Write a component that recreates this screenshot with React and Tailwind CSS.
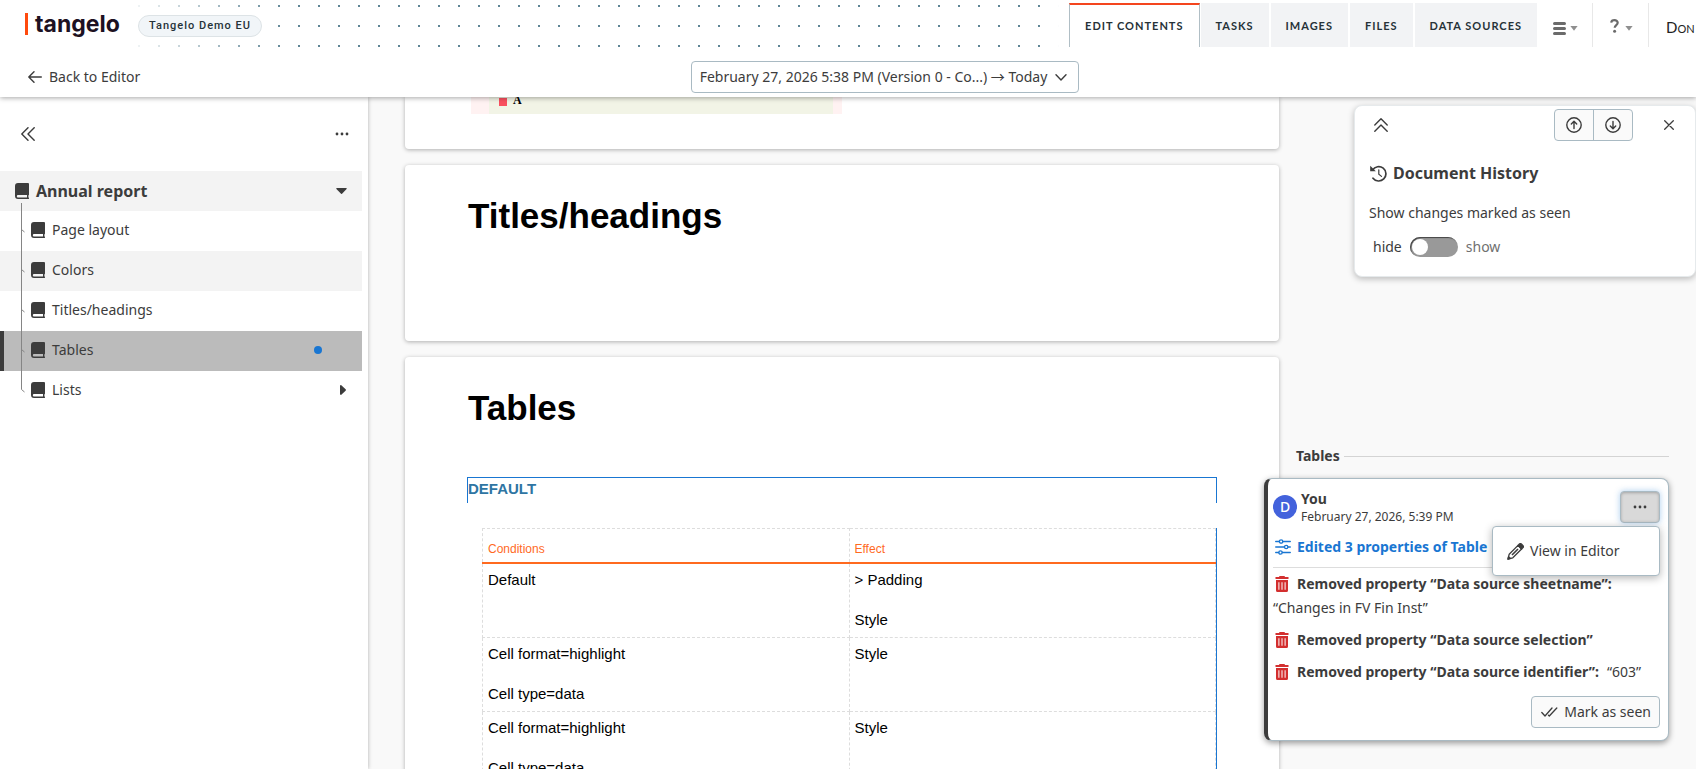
import React, { useState } from "react";

const TREE = [
  { label: "Page layout" },
  { label: "Colors", shaded: true },
  { label: "Titles/headings" },
  { label: "Tables", active: true },
  { label: "Lists", more: true },
];

const TABS = ["Tasks", "Images", "Files", "Data sources"];

const ROWS = [
  [["Default"], ["> Padding", "Style"]],
  [["Cell format=highlight", "Cell type=data"], ["Style"]],
  [["Cell format=highlight", "Cell type=data"], ["Style"]],
];

const stroke = {
  fill: "none",
  stroke: "currentColor",
  strokeLinecap: "round",
  strokeLinejoin: "round",
};

function BookIcon() {
  return (
    <svg width="14" height="16" viewBox="0 0 14 16" className="shrink-0" aria-hidden="true">
      <path
        fill="currentColor"
        d="M3 0h10a1 1 0 0 1 1 1v10.5a1 1 0 0 1-.6.9v2.1h.1a.75.75 0 0 1 0 1.5H3a3 3 0 0 1-3-3V3a3 3 0 0 1 3-3zm0 12a1.2 1.2 0 0 0 0 2.4h9V12z"
      />
    </svg>
  );
}

function Ellipsis() {
  return (
    <svg width="14" height="4" viewBox="0 0 14 4" fill="currentColor" aria-hidden="true">
      <circle cx="2" cy="2" r="1.4" />
      <circle cx="7" cy="2" r="1.4" />
      <circle cx="12" cy="2" r="1.4" />
    </svg>
  );
}

function TrashIcon() {
  return (
    <svg width="14" height="16" viewBox="0 0 14 16" className="shrink-0 text-[#d32f2f]" aria-hidden="true">
      <path
        fill="currentColor"
        fillRule="evenodd"
        d="M4.5 0h5l.5 1h3.500v2H.5V1H4zM1 4h12v10.500a1.500 1.500 0 0 1-1.500 1.500h-9A1.500 1.500 0 0 1 1 14.500zM3.400 6.200v7.600h1V6.200zM6.500 6.200v7.600h1V6.200zM9.600 6.200v7.600h1V6.200z"
      />
    </svg>
  );
}

function SlidersIcon() {
  return (
    <svg width="16" height="16" viewBox="0 0 16 16" {...stroke} strokeWidth="1.300" aria-hidden="true">
      <path d="M.7 2.500h3.600M8 2.500h7.300M.7 8h8.600M13 8h2.300M.7 13.500h3M7.400 13.500h7.900" />
      <circle cx="6.100" cy="2.500" r="1.700" />
      <circle cx="11.200" cy="8" r="1.700" />
      <circle cx="5.500" cy="13.500" r="1.700" />
    </svg>
  );
}

function Caret({ className }) {
  return (
    <svg width="8" height="5" viewBox="0 0 8 5" className={className} aria-hidden="true">
      <path d="M.4 0h7.200L4 4.800z" fill="currentColor" />
    </svg>
  );
}

function Header() {
  return (
    <header className="relative z-30 flex h-[47px] shrink-0 items-stretch bg-white">
      <a href="#home" className="flex w-[138px] shrink-0 items-center pt-px pl-[25px]" aria-label="tangelo home">
        <span className="h-[22px] w-[3px] bg-[#ff4a0d]" />
        <span className="pl-[7px] font-['Inter',sans-serif] text-[23px] leading-6 font-bold text-[#1d1122]">
          tangelo
        </span>
      </a>
      <div className="relative flex min-w-0 flex-1 items-center">
        <svg
          className="absolute inset-0 h-full w-full mask-[linear-gradient(to_right,rgba(0,0,0,0.1),#000_150px,#000_calc(100%_-_20px),transparent)]"
          aria-hidden="true"
        >
          <defs>
            <pattern id="dots" width="20" height="20" patternUnits="userSpaceOnUse">
              <rect x="0" y="5" width="2" height="2" fill="#5f8595" />
            </pattern>
          </defs>
          <rect width="100%" height="100%" fill="url(#dots)" />
        </svg>
        <span className="relative mt-[5px] rounded-full border border-[#dde3e6] bg-[#f1f5f8] px-[10px] font-['Roboto',sans-serif] text-[11px] leading-5 font-medium tracking-[1px] text-[#263238]">
          Tangelo Demo EU
        </span>
      </div>
      <nav className="ml-[10px] flex shrink-0 items-stretch gap-[2px] pt-[3px] font-['Lato',sans-serif] text-[11px] font-bold tracking-[1px] text-[#263238] uppercase">
        <a
          href="#edit"
          aria-current="page"
          className="-mr-px flex items-center border-x border-t-2 border-x-[#b0bec5] border-t-[#f4451e] px-[15px]"
        >
          Edit contents
        </a>
        {TABS.map((tab) => (
          <a key={tab} href={"#" + tab} className="flex items-center bg-[#f2f3f5] px-[15px] pt-[2px]">
            {tab}
          </a>
        ))}
      </nav>
      <div className="flex shrink-0 items-stretch pt-[3px] text-[#6b6b6b]">
        <button aria-label="Menu" className="flex w-[56px] items-center gap-1 border-r border-[#e8e8e8] pt-[6px] pl-4">
          <svg width="13" height="13" viewBox="0 0 13 13" aria-hidden="true">
            <path d="M1.500 1.500h10M1.500 6.500h10M1.500 11.500h10" stroke="currentColor" strokeWidth="3" strokeLinecap="round" />
          </svg>
          <Caret className="text-[#8f8f8f]" />
        </button>
        <button aria-label="Help" className="flex w-[56px] items-center gap-[6px] border-r border-[#e8e8e8] pt-[6px] pl-[17px]">
          <svg width="9" height="14" viewBox="0 0 9 14" className="mb-1" aria-hidden="true">
            <path d="M1.200 3.600C1.400 2 2.800 1.200 4.500 1.200s3.200.9 3.200 2.600c0 2.200-3 2.400-3 5" fill="none" stroke="currentColor" strokeWidth="2.200" />
            <circle cx="4.600" cy="12.300" r="1.500" fill="currentColor" />
          </svg>
          <Caret className="text-[#8f8f8f]" />
        </button>
        <span className="w-[47px] overflow-hidden pt-[14px] pl-[17px] font-['Lato',sans-serif] text-[15px] whitespace-nowrap text-[#222] [font-variant:small-caps]">
          Don
        </span>
      </div>
    </header>
  );
}

function VersionBar() {
  return (
    <div className="relative z-20 grid h-[50px] shrink-0 grid-cols-[1fr_auto_1fr] items-center bg-white pt-[10px] shadow-[0_1px_5px_rgba(0,0,0,0.35)]">
      <div className="pl-7">
        <a href="#back" className="inline-flex items-center gap-[7px]">
          <svg width="14" height="12" viewBox="0 0 14 12" {...stroke} strokeWidth="1.400" aria-hidden="true">
            <path d="M13.300 6H.8M6 .8.8 6 6 11.200" />
          </svg>
          Back to Editor
        </a>
      </div>
      <button className="ml-[74px] flex h-8 items-center gap-2 rounded border border-[#a9bac3] bg-white pr-[11px] pl-2">
        <span>
          February 27, 2026 5:38 PM (Version 0 - Co...){" "}
          <span className="font-['Noto_Sans_CJK_JP',sans-serif] leading-none">→</span> Today
        </span>
        <svg width="12" height="7" viewBox="0 0 12 7" {...stroke} strokeWidth="1.400" aria-hidden="true">
          <path d="M1 .8 6 6 11 .8" />
        </svg>
      </button>
    </div>
  );
}

function Sidebar() {
  return (
    <aside className="relative z-10 w-[368px] shrink-0 bg-white pr-[6px] shadow-[0_0_4px_rgba(0,0,0,0.3)]">
      <div className="flex h-[74px] items-center justify-between pr-[13px] pl-[21px]">
        <button aria-label="Collapse sidebar">
          <svg width="14" height="14" viewBox="0 0 14 14" {...stroke} strokeWidth="1.400" aria-hidden="true">
            <path d="M7 .7.8 7 7 13.300M13.200.7 7 7l6.200 6.300" />
          </svg>
        </button>
        <button aria-label="More options">
          <Ellipsis />
        </button>
      </div>
      <div className="flex h-10 items-center gap-[7px] bg-[#f3f3f3] pr-[15px] pl-[15px] text-[16px] font-bold">
        <BookIcon />
        <span className="flex-1">Annual report</span>
        <svg width="11" height="6" viewBox="0 0 11 6" fill="currentColor" aria-hidden="true">
          <path d="M.9 0h9.200c.6 0 .9.700.5 1.100L6.300 5.600a1 1 0 0 1-1.500 0L.4 1.100C0 .7.300 0 .9 0z" />
        </svg>
      </div>
      <ul className="relative">
        {TREE.map((item) => (
          <li
            key={item.label}
            className={
              "flex h-10 items-center gap-[7px] pr-[15px] pb-[2px] " +
              (item.active ? "border-l-4 border-[#3c3c3c] bg-[#bbb] pl-[27px]" : item.shaded ? "bg-[#f3f3f3] pl-[31px]" : "pl-[31px]")
            }
          >
            <BookIcon />
            <a href={"#" + item.label} className="flex-1">
              {item.label}
            </a>
            {item.active && <span className="mr-[25px] size-2 rounded-full bg-[#1976d2]" />}
            {item.more && (
              <svg width="7" height="10" viewBox="0 0 7 10" fill="currentColor" aria-hidden="true">
                <path d="M0 .9C0 .2.800-.2 1.300.3l4.300 4a1 1 0 0 1 0 1.400l-4.300 4C.8 10.200 0 9.800 0 9.100z" />
              </svg>
            )}
          </li>
        ))}
        <svg className="absolute -top-2 left-[21px]" width="5" height="190" viewBox="0 0 5 190" fill="none" stroke="#858585" aria-hidden="true">
          <path d="M.5 0v186.500l3 2.500M.5 26.500l3 2.500M.5 66.500l3 2.500M.5 106.500l3 2.500M.5 146.500l3 2.500" />
        </svg>
      </ul>
    </aside>
  );
}

function Sheet({ children, className }) {
  return (
    <section className={"bg-white px-[62px] shadow-[0_1px_4px_rgba(0,0,0,0.3)] " + className}>{children}</section>
  );
}

function Title({ children }) {
  return <h1 className="pl-px text-[35px] leading-10 font-bold">{children}</h1>;
}

function Document() {
  return (
    <main className="flex min-w-0 flex-1 flex-col gap-4 pl-[37px] font-['Liberation_Sans',Arial,sans-serif] text-black">
      <Sheet className="h-[52px] shrink-0 rounded-b">
        <div className="ml-1 flex h-[17px] w-[371px] items-start gap-[6px] border-r-[9px] border-l-[18px] border-[#fff2f2] bg-[#f2f4e6] pl-[10px]">
          <span className="mt-px size-2 bg-[#f9505f]" />
          <span className="font-['Liberation_Serif',serif] text-[12px] leading-[7px] font-bold">A</span>
        </div>
      </Sheet>
      <Sheet className="h-[176px] shrink-0 rounded pt-[31px]">
        <Title>Titles/headings</Title>
      </Sheet>
      <Sheet className="min-h-[500px] shrink-0 rounded pt-[31px]">
        <Title>Tables</Title>
        <h2 className="mt-[49px] h-[26px] border border-b-0 border-[#1976d2] pt-px text-[15px] leading-5 font-bold text-[#2e75a3]">
          DEFAULT
        </h2>
        <div className="mt-[25px] border-r border-[#1976d2] pl-[15px]">
          <table className="w-full table-fixed border-collapse text-left text-[15px] leading-5">
            <thead>
              <tr className="text-[12px] font-normal text-[#ff6a1f]">
                {["Conditions", "Effect"].map((h) => (
                  <th
                    key={h}
                    className="h-[34px] border border-b-2 border-dashed border-[#ddd] border-b-[#ff6a1f] px-[5px] pt-2 font-normal [border-bottom-style:solid]"
                  >
                    {h}
                  </th>
                ))}
              </tr>
            </thead>
            <tbody>
              {ROWS.map((row, i) => (
                <tr key={i}>
                  {row.map((lines, j) => (
                    <td key={j} className="border border-dashed border-[#ddd] px-[5px] pt-[6px] pb-[7px] align-top">
                      <div className="flex flex-col gap-5">
                        {lines.map((line) => (
                          <p key={line}>{line}</p>
                        ))}
                      </div>
                    </td>
                  ))}
                </tr>
              ))}
            </tbody>
          </table>
        </div>
      </Sheet>
    </main>
  );
}

function HistoryPanel() {
  const [showSeen, setShowSeen] = useState(false);
  return (
    <section className="ml-[75px] h-[172px] rounded-lg border border-[#e6eaec] bg-white shadow-[0_2px_6px_rgba(0,0,0,0.25)]">
      <div className="flex h-[37px] items-center pr-[21px] pl-[19px]">
        <button aria-label="Collapse panel" className="mr-auto">
          <svg width="14" height="14" viewBox="0 0 14 14" {...stroke} strokeWidth="1.400" aria-hidden="true">
            <path d="M.8 7 7 .8 13.200 7M.8 13.200 7 7l6.200 6.200" />
          </svg>
        </button>
        <div className="flex h-8 overflow-hidden rounded border border-[#a9bac3] bg-[#fafafa]">
          <button aria-label="Previous change" className="flex w-[39px] items-center justify-center border-r border-[#a9bac3]">
            <svg width="16" height="16" viewBox="0 0 16 16" {...stroke} strokeWidth="1.400" aria-hidden="true">
              <circle cx="8" cy="8" r="7.200" />
              <path d="M8 11.500v-7M5.300 7 8 4.300 10.700 7" />
            </svg>
          </button>
          <button aria-label="Next change" className="flex w-[38px] items-center justify-center">
            <svg width="16" height="16" viewBox="0 0 16 16" {...stroke} strokeWidth="1.400" aria-hidden="true">
              <circle cx="8" cy="8" r="7.200" />
              <path d="M8 4.500v7M5.300 9 8 11.700 10.700 9" />
            </svg>
          </button>
        </div>
        <button aria-label="Close" className="ml-[31px]">
          <svg width="10" height="10" viewBox="0 0 10 10" {...stroke} strokeWidth="1.300" aria-hidden="true">
            <path d="m.7.7 8.600 8.600M9.300.7.7 9.300" />
          </svg>
        </button>
      </div>
      <div className="px-[14px] pt-[18px]">
        <h2 className="flex h-6 items-center gap-[6px] pl-px text-[16px] font-bold">
          <svg width="17" height="17" viewBox="0 0 17 17" fill="none" stroke="currentColor" aria-hidden="true">
            <path d="M2.600 5A7.200 7.200 0 1 1 3 13.200" strokeWidth="1.700" strokeLinecap="round" />
            <path d="M.2.800v5.400h5.600z" fill="currentColor" stroke="none" />
            <path d="M8.800 4.800v4.400l2.700 2.200" strokeWidth="1.200" strokeLinecap="round" />
          </svg>
          Document History
        </h2>
        <p className="mt-4 leading-6">Show changes marked as seen</p>
        <div className="mt-[10px] flex items-center gap-2 pl-1 leading-6">
          <span>hide</span>
          <label className="relative inline-flex h-5 w-12 items-center rounded-full bg-[#999] p-[2px] shadow-[inset_1px_1px_1px_#444]">
            <input
              type="checkbox"
              role="switch"
              aria-label="Show changes marked as seen"
              checked={showSeen}
              onChange={(e) => setShowSeen(e.target.checked)}
              className="peer absolute inset-0 m-0 appearance-none"
            />
            <span className="size-4 rounded-full bg-white peer-checked:ml-auto" />
          </label>
          <span className="text-[#707070]">show</span>
        </div>
      </div>
    </section>
  );
}

function Removed({ children, value, note }) {
  return (
    <li>
      <div className="flex items-center gap-2 pl-[2px] font-bold whitespace-nowrap">
        <TrashIcon />
        <span>{children}</span>
        {value && <span className="font-normal">{value}</span>}
      </div>
      {note && <p>{note}</p>}
    </li>
  );
}

function ChangeCard() {
  return (
    <article className="relative mr-[27px] -ml-[15px] rounded-lg border border-l-4 border-[#a9bac3] border-l-[#3c3c3c] bg-white py-3 pr-2 pl-[5px] shadow-[0_2px_6px_rgba(0,0,0,0.4)]">
      <header className="flex h-8 items-center gap-1">
        <span className="flex size-6 shrink-0 items-center justify-center rounded-full bg-[#4362dc] text-[14px] font-medium text-white">
          D
        </span>
        <div className="flex-1 pt-[2px] leading-[18px]">
          <div className="font-bold">You</div>
          <div className="text-[12px]">February 27, 2026, 5:39 PM</div>
        </div>
        <button
          aria-label="Change actions"
          className="flex h-8 w-10 items-center justify-center rounded border border-[#a9bac3] bg-[#d9d9d9] shadow-[0_0_6px_rgba(25,118,210,0.35),inset_0_1px_3px_rgba(0,0,0,0.25)]"
        >
          <Ellipsis />
        </button>
      </header>
      <div className="absolute top-[47px] right-2 flex h-[50px] w-[168px] items-center rounded border border-[#a9bac3] bg-white pl-[14px] shadow-[0_2px_8px_rgba(0,0,0,0.3)]">
        <button className="flex items-center gap-[6px]">
          <svg width="17" height="17" viewBox="0 0 17 17" fill="none" stroke="currentColor" strokeWidth="1.300" strokeLinejoin="round" aria-hidden="true">
            <path d="M1 16l1.200-4.800L11 2.400l3.600 3.600L5.800 14.800z" />
            <path d="M11 2.400 12.400 1a1.400 1.400 0 0 1 2 0L16 2.600a1.400 1.400 0 0 1 0 2L14.600 6z" fill="currentColor" />
            <path d="M5 12l6-6" strokeWidth="1.600" />
            <path d="M1 16l.6-2.400 1.800 1.800z" />
          </svg>
          View in Editor
        </button>
      </div>
      <a href="#change" className="mt-3 flex h-6 items-center gap-[6px] pl-[2px] font-bold text-[#1976d2]">
        <SlidersIcon />
        Edited 3 properties of Table
      </a>
      <hr className="mt-2 mb-1 border-[#ddd]" />
      <ul className="flex flex-col gap-2 leading-6">
        <Removed note="“Changes in FV Fin Inst”">Removed property “Data source sheetname”:</Removed>
        <Removed>Removed property “Data source selection”</Removed>
        <Removed value="“603”">Removed property “Data source identifier”:</Removed>
      </ul>
      <div className="mt-3 flex justify-end">
        <button className="flex h-8 items-center gap-[6px] rounded border border-[#a9bac3] bg-[#fafafa] pr-2 pl-[9px]">
          <svg width="17" height="10" viewBox="0 0 17 10" {...stroke} strokeWidth="1.300" aria-hidden="true">
            <path d="M.8 5.500 4 9l7-8M7.500 8.200l.8.800 7.500-8" />
          </svg>
          Mark as seen
        </button>
      </div>
    </article>
  );
}

export default function App() {
  return (
    <div className="flex h-screen flex-col overflow-hidden bg-[#f9f9f9] font-['Noto_Sans',sans-serif] text-[14px] leading-5 text-[#3c3c3c]">
      <Header />
      <VersionBar />
      <div className="flex min-h-0 flex-1">
        <Sidebar />
        <Document />
        <aside className="relative w-[417px] shrink-0 pt-2">
          <HistoryPanel />
          <div className="mt-[169px] mb-3 ml-[17px] flex items-center gap-1 pr-[27px] font-bold">
            Tables
            <span className="h-px flex-1 bg-[#d4d4d4]" />
          </div>
          <ChangeCard />
        </aside>
      </div>
    </div>
  );
}
